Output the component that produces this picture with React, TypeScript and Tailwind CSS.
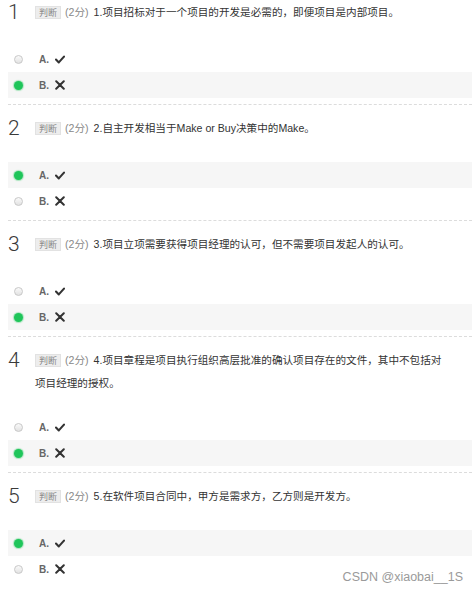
import React from "react";

type Q = { n: number; text: string; sel: "A" | "B"; multi?: boolean };

const qs: Q[] = [
  { n: 1, text: "1.项目招标对于一个项目的开发是必需的，即便项目是内部项目。", sel: "B" },
  { n: 2, text: "2.自主开发相当于Make or Buy决策中的Make。", sel: "A" },
  { n: 3, text: "3.项目立项需要获得项目经理的认可，但不需要项目发起人的认可。", sel: "B" },
  { n: 4, text: "4.项目章程是项目执行组织高层批准的确认项目存在的文件，其中不包括对项目经理的授权。", sel: "B", multi: true },
  { n: 5, text: "5.在软件项目合同中，甲方是需求方，乙方则是开发方。", sel: "A" },
];

const Check = () => (
  <svg width="10" height="9" viewBox="0 0 10 9" className="block">
    <path d="M1 4.6 L3.8 7.4 L9 1.6" fill="none" stroke="#333" strokeWidth="2.1" strokeLinecap="round" strokeLinejoin="round" />
  </svg>
);

const Cross = () => (
  <svg width="10" height="10" viewBox="0 0 10 10" className="block">
    <path d="M1.2 1.2 L8.8 8.8 M8.8 1.2 L1.2 8.8" fill="none" stroke="#333" strokeWidth="2" strokeLinecap="round" />
  </svg>
);

const Radio = ({ on }: { on: boolean }) =>
  on ? (
    <span className="block w-[9px] h-[9px] rounded-full bg-[#1fc55a] shadow-[0_0_1px_1px_rgba(31,197,90,0.35)]" />
  ) : (
    <span className="block w-[9px] h-[9px] rounded-full border border-[#c8c8c8] bg-gradient-to-b from-[#fafafa] to-[#e2e2e2]" />
  );

function Option({ label, on }: { label: "A" | "B"; on: boolean }) {
  return (
    <div className={`flex items-center h-[26px] pl-[6px] ${on ? "bg-[#f6f6f6]" : ""}`}>
      <Radio on={on} />
      <span className="ml-[16px] text-[10px] font-bold text-[#666] w-[16px]">{label}.</span>
      {label === "A" ? <Check /> : <Cross />}
    </div>
  );
}

export default function App() {
  return (
    <div className="relative w-[474px] h-[590px] bg-white overflow-hidden" style={{ fontFamily: '"Liberation Sans", Arial, "Noto Sans CJK SC", sans-serif' }}>
      {qs.map((q, i) => (
        <div
          key={q.n}
          className={`ml-2 mr-[2px] pb-[6px] ${i === qs.length - 1 ? "" : "border-b border-dashed border-[#dcdcdc]"} ${i === 0 ? "pt-[1px]" : "pt-[12px]"}`}
        >
          <div className="flex">
            <span className="w-[27px] shrink-0 text-[21px] leading-[22px] font-light text-[#3a3a3a]" style={{ fontFamily: 'Roboto, "Liberation Sans", sans-serif' }}>{q.n}</span>
            <div className="flex-1 pr-[24px] text-[10.6px] leading-[23px] text-[#333]">
              <span className="inline-block align-top mt-[5px] px-[3px] h-[13px] leading-[12px] bg-[#ededed] border border-[#e2e2e2] text-[9px] text-[#888] mr-[4px]">判断</span>
              <span className="text-[#888]">(2分)</span>
              <span className="ml-[5px]">{q.text}</span>
            </div>
          </div>
          <div className={q.multi ? "mt-[19px]" : "mt-[22px]"}>
            <Option label="A" on={q.sel === "A"} />
            <Option label="B" on={q.sel === "B"} />
          </div>
        </div>
      ))}
      <div className="absolute right-[11px] top-[569px] text-[12.5px] leading-[16px] text-[#9a9a9a]">CSDN @xiaobai__1S</div>
    </div>
  );
}
